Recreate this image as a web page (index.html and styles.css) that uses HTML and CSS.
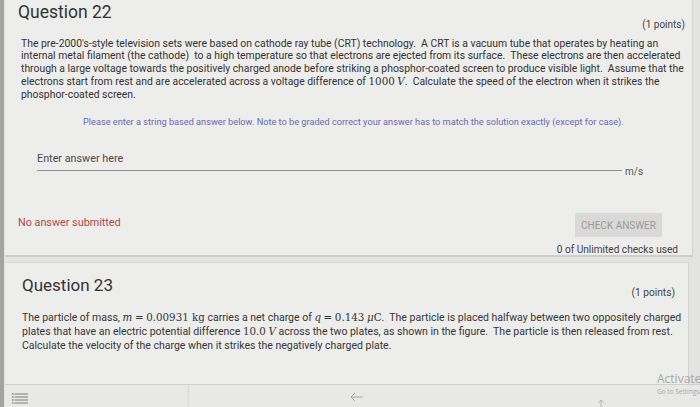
FILE: index.html
```html
<!DOCTYPE html>
<html>
<head>
<meta charset="utf-8">
<link rel="stylesheet" href="styles.css">
</head>
<body>
<div class="screen">
  <div class="strip"></div>
  <div class="main">
    <section class="card card1">
      <h2 class="qtitle">Question 22</h2>
      <div class="points">(1 points)</div>
      <p class="body">The pre-2000's-style television sets were based on cathode ray tube (CRT) technology.&nbsp; A CRT is a vacuum tube that operates by heating an internal metal filament (the cathode)&nbsp; to a high temperature so that electrons are ejected from its surface.&nbsp; These electrons are then accelerated through a large voltage towards the positively charged anode before striking a phosphor-coated screen to produce visible light.&nbsp; Assume that the electrons start from rest and are accelerated across a voltage difference of <span class="m">1000</span> <span class="m i">V</span>.&nbsp; Calculate the speed of the electron when it strikes the phosphor-coated screen.</p>
      <p class="note">Please enter a string based answer below. Note to be graded correct your answer has to match the solution exactly (except for case).</p>
      <div class="answer">
        <div class="field">Enter answer here</div>
        <div class="unit">m/s</div>
      </div>
      <div class="status">
        <div class="none">No answer submitted</div>
        <div class="check">
          <div class="btn">CHECK ANSWER</div>
          <div class="used">0 of Unlimited checks used</div>
        </div>
      </div>
    </section>
    <section class="card card2">
      <h2 class="qtitle">Question 23</h2>
      <div class="points">(1 points)</div>
      <p class="body b2">The particle of mass, <span class="m i">m</span> <span class="m">=</span> <span class="m">0.00931 kg</span> carries a net charge of <span class="m i">q</span> <span class="m">=</span> <span class="m">0.143</span> <span class="m"><i>μ</i>C</span>.&nbsp; The particle is placed halfway between two oppositely charged plates that have an electric potential difference <span class="m">10.0</span> <span class="m i">V</span> across the two plates, as shown in the figure.&nbsp; The particle is then released from rest. Calculate the velocity of the charge when it strikes the negatively charged plate.</p>
    </section>
    <div class="bar">
      <svg class="menu" width="16" height="11" viewBox="0 0 16 11"><g stroke="#8c8c8c" stroke-width="1.2"><line x1="2.5" y1="1" x2="16" y2="1"/><line x1="2.5" y1="4" x2="16" y2="4"/><line x1="2.5" y1="7" x2="16" y2="7"/><line x1="2.5" y1="10" x2="16" y2="10"/></g><g fill="#707070"><rect x="0" y="0.4" width="1.6" height="1.2"/><rect x="0" y="3.4" width="1.6" height="1.2"/><rect x="0" y="6.4" width="1.6" height="1.2"/><rect x="0" y="9.4" width="1.6" height="1.2"/></g></svg>
      <div class="divider"></div>
      <svg class="back" width="13" height="10" viewBox="0 0 13 10"><path d="M12.5 5H1M5 1L1 5l4 4" fill="none" stroke="#a3a3a3" stroke-width="1"/></svg>
      <svg class="up" width="8" height="8" viewBox="0 0 8 8"><path d="M4 8V1M1 4l3-3 3 3" fill="none" stroke="#b0b0b0" stroke-width="0.9"/></svg>
      <div class="activate"><div>Activate</div><div class="sub">Go to Settings</div></div>
    </div>
  </div>
</div>
</body>
</html>
```
FILE: styles.css
```css
html, body { margin: 0; padding: 0; }
body {
  width: 700px; height: 407px; overflow: hidden;
  background: #e3e3e1;
  font-family: Roboto, "Noto Sans", sans-serif;
  color: #3a3a3a;
}
.screen { display: flex; height: 407px; }
.strip { width: 4px; background: #a3a3a1; flex: none; }
.main { flex: 1; display: flex; flex-direction: column; padding-left: 1px; }
.card {
  background: #ededeb;
  border-right: 1px solid #d2d2d0;
  box-sizing: border-box;
  flex: none;
}
.card1 { width: 688px; height: 257px; padding: 0 0 0 13px; border-bottom: 2px solid #cdcdcb; }
.qtitle { margin: 0; font-weight: 400; font-size: 17.5px; line-height: 22px; color: #333; }
.card1 .qtitle { padding-top: 1px; }
.points { text-align: right; font-size: 10px; line-height: 12px; color: #444; }
.card1 .points { margin: -4px 7px 0 0; }
.body { margin: 0; color: #333; }
.card1 .body { margin-top: 6.6px; padding-left: 3px; width: 674px; box-sizing: border-box; font-size: 10.4px; line-height: 12.8px; }
.m { font-family: "DejaVu Serif", "Liberation Serif", serif; font-size: 10.3px; line-height: 1; }
.i { font-style: italic; }
.note { margin: 14.4px 0 0 65px; font-size: 9.2px; color: #6a6ab8; line-height: 12px; }
.answer { display: flex; align-items: flex-end; margin: 24.5px 0 0 19px; }
.field {
  width: 585px; border-bottom: 1px solid #8e8e8e;
  font-size: 10.8px; color: #4a4a4a; line-height: 13px; padding-bottom: 5px;
}
.unit { font-size: 10px; line-height: 12px; color: #555; margin-left: 3px; margin-bottom: -7px; }
.status { display: flex; justify-content: space-between; align-items: flex-start; margin-top: 42px; }
.none { font-size: 10.8px; line-height: 13px; color: #b04848; margin-top: 2.5px; }
.check { display: flex; flex-direction: column; align-items: flex-end; margin-right: 14px; }
.btn {
  width: 87px; height: 24px; margin-right: 16px;
  background: #d9d9d7; color: #9a9a9a; font-size: 10px;
  display: flex; align-items: center; justify-content: center;
}
.used { font-size: 10.1px; line-height: 12px; color: #3f3f3f; margin-top: 7px; }
.card2 { width: 684px; height: 122px; margin-top: 5px; padding: 12px 0 0 17px; border-top: 1px solid #d8d8d6; }
.card2 .qtitle { font-size: 17px; line-height: 20px; }
.card2 .points { margin: -8px 13px 0 0; font-size: 10.2px; }
.b2 { margin-top: 12px; font-size: 10.5px; line-height: 14px; width: 668px; color: #363636; }
.bar {
  flex: 1; border-top: 1px solid #d0d0ce; background: #e8e8e6;
  position: relative;
}
.menu { position: absolute; left: 7px; top: 8px; }
.divider { position: absolute; left: 183px; top: 0; bottom: 0; width: 1px; background: #d6d6d4; }
.back { position: absolute; left: 345px; top: 7px; }
.up { position: absolute; left: 592px; top: 14px; }
.activate { position: absolute; left: 652px; top: -13px; font-size: 12px; color: #a8a8a8; font-family: "Open Sans", sans-serif; line-height: 14px; white-space: nowrap; }
.activate .sub { font-size: 6.5px; line-height: 8px; margin-top: 2px; }
```
